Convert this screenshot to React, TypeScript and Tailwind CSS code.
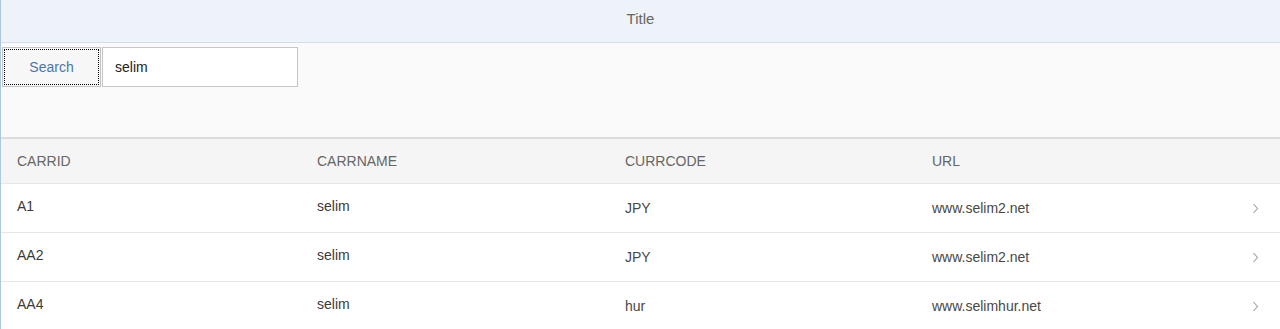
const rows = [
  { carrid: "A1", carrname: "selim", currcode: "JPY", url: "www.selim2.net" },
  { carrid: "AA2", carrname: "selim", currcode: "JPY", url: "www.selim2.net" },
  { carrid: "AA4", carrname: "selim", currcode: "hur", url: "www.selimhur.net" },
];

function Chevron() {
  return (
    <svg width="7" height="11" viewBox="0 0 7 11" className="text-[#a0a0a0]">
      <polyline points="1.5,1 5.5,5.5 1.5,10" fill="none" stroke="currentColor" strokeWidth="1.1" />
    </svg>
  );
}

export default function App() {
  return (
    <div className="h-[329px] overflow-hidden border-l border-[#adc6e2] bg-white font-['Liberation_Sans',Arial,sans-serif]">
      <header className="flex h-[43px] items-center justify-center border-b border-[#d0dded] bg-[#eef3f9] pb-[3px] text-[15px] text-[#666666]">
        Title
      </header>

      <section className="h-[96px] border-b-2 border-[#dcdcdc] bg-[#fafafa] pl-[1px] pt-[4px]">
        <div className="flex gap-[1px]">
          <button className="h-[40px] w-[99px] border border-[#c3c3c3] bg-[#f7f7f7] text-[14px] text-[#4a76aa] outline-1 outline-offset-[-3px] outline-dotted outline-black">
            Search
          </button>
          <div className="flex h-[40px] w-[196px] items-center border border-[#c6c6c6] bg-white pl-[12px] text-[14px] text-[#222222]">
            selim
          </div>
        </div>
      </section>

      <div className="grid h-[45px] grid-cols-[300px_308px_307px_1fr] items-center border-b border-[#e6e6e6] bg-[#f5f5f5] text-[14px] text-[#666666]">
        <div className="pl-[16px]">CARRID</div>
        <div className="pl-[16px]">CARRNAME</div>
        <div className="pl-[16px]">CURRCODE</div>
        <div className="pl-[16px]">URL</div>
      </div>

      {rows.map((r, i) => (
        <div
          key={i}
          className="grid h-[49px] grid-cols-[300px_308px_307px_1fr] items-center border-b border-[#e6e6e6] text-[14px] text-[#3a3a3a]"
        >
          <div className="pb-[3px] pl-[16px]">{r.carrid}</div>
          <div className="pb-[3px] pl-[16px]">{r.carrname}</div>
          <div className="pl-[16px] text-[#484848]">{r.currcode}</div>
          <div className="flex items-center justify-between pl-[16px] pr-[21px] text-[#484848]">
            <span>{r.url}</span>
            <Chevron />
          </div>
        </div>
      ))}
    </div>
  );
}
